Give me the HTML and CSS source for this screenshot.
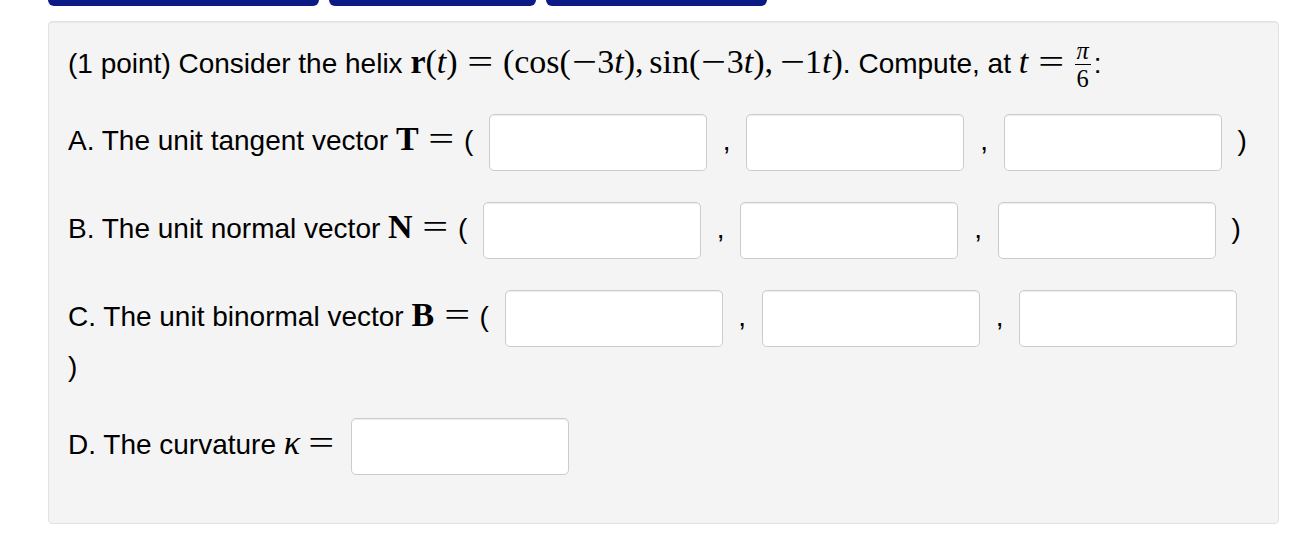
FILE: index.html
```html
<!DOCTYPE html>
<html lang="en">
<head>
<meta charset="utf-8">
<title>Helix problem</title>
<link rel="stylesheet" href="styles.css">
</head>
<body>
<div class="page">
  <div class="tabs">
    <span class="tab t1"></span>
    <span class="tab t2"></span>
    <span class="tab t3"></span>
  </div>
  <div class="well">
    <p class="line">(1 point) Consider the helix <span class="m"><b>r</b>(<i>t</i>)<span class="rel">=</span>(cos(<span class="op">−</span>3<i>t</i>),<span class="thin"></span>sin(<span class="op">−</span>3<i>t</i>),<span class="thin"></span><span class="op">−</span>1<i>t</i>)</span>. Compute, at <span class="m"><i>t</i><span class="rel">=</span><span class="frac"><span class="num"><i>π</i></span><span class="den">6</span></span></span>:</p>

    <p class="row">A. The unit tangent vector <span class="m"><b>T</b><span class="rel">=</span></span>( <input class="ans" type="text"> , <input class="ans" type="text"> , <input class="ans" type="text"> )</p>

    <p class="row">B. The unit normal vector <span class="m"><b>N</b><span class="rel">=</span></span>( <input class="ans" type="text"> , <input class="ans" type="text"> , <input class="ans" type="text"> )</p>

    <p class="row">C. The unit binormal vector <span class="m"><b>B</b><span class="rel">=</span></span>( <input class="ans" type="text"> , <input class="ans" type="text"> , <input class="ans" type="text"> )</p>

    <p class="row">D. The curvature <span class="m"><i class="kappa">κ</i><span class="rel">=</span></span><input class="ans" type="text"></p>
  </div>
</div>
</body>
</html>
```

FILE: styles.css
```css
body {
  margin: 0;
  background: #ffffff;
  color: #000000;
  font-family: "Liberation Sans", Arial, sans-serif;
  font-size: 28px;
}

.page {
  padding: 0 29px 0 48px;
}

.tabs {
  display: flex;
  gap: 10px;
  height: 6px;
}

.tab {
  display: block;
  background: #0b1a85;
  border-radius: 0 0 6px 6px;
}

.t1 { width: 271px; }
.t2 { width: 207px; }
.t3 { width: 221px; }

.well {
  margin-top: 15px;
  background: #f4f4f4;
  border: 1px solid #e3e3e3;
  border-radius: 4px;
  padding: 15px 26px 48px 19px;
  box-shadow: inset 0 1px 1px rgba(0, 0, 0, 0.05);
}

.line {
  margin: 0;
  height: 46px;
  line-height: 52px;
}

.row {
  margin: 31px 0 0;
  line-height: 40px;
}

.m {
  font-family: "Liberation Serif", "Times New Roman", serif;
  font-size: 34px;
  line-height: 1;
}

.m b {
  font-weight: bold;
}

.kappa {
  margin-right: -2px;
}

.rel {
  display: inline-block;
  width: 0.778em;
  margin: 0 0.2778em;
  text-align: center;
  transform: scaleX(1.35);
}

.op {
  display: inline-block;
  width: 0.778em;
  text-align: center;
  transform: scaleX(1.3);
}

.thin {
  display: inline-block;
  width: 0.1667em;
}

.frac {
  display: inline-flex;
  flex-direction: column;
  align-items: center;
  font-size: 0.72em;
  vertical-align: 14px;
  margin: 0 3px 0 1px;
}

.num,
.den {
  line-height: 1.11;
  padding: 0 2px;
}

.num {
  border-bottom: 1px solid #000;
}

.ans {
  display: inline-block;
  box-sizing: border-box;
  width: 218px;
  height: 57px;
  margin: 0 8px;
  padding: 4px 8px;
  border: 1px solid #cccccc;
  border-radius: 5px;
  background: #ffffff;
  box-shadow: inset 0 1px 1px rgba(0, 0, 0, 0.075);
  vertical-align: middle;
  font: 28px "Liberation Sans", Arial, sans-serif;
}
```
